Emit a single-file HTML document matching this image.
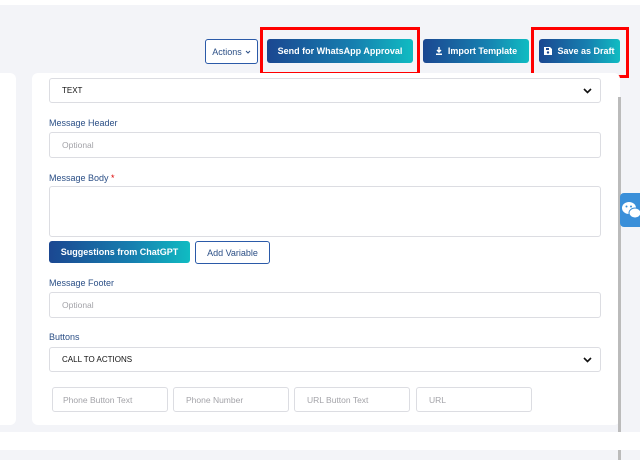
<!DOCTYPE html>
<html><head><style>
*{box-sizing:border-box;margin:0;padding:0}
html,body{width:640px;height:450px}
body{background:#f3f4f8;font-family:"Liberation Sans",sans-serif;position:relative;overflow:hidden;font-size:9px}
.a{position:absolute}
.top{left:0;top:0;width:640px;height:5px;background:#fff}
.g{background:linear-gradient(90deg,#1b4791,#1680b0 60%,#10bcc2);color:#fff;font-weight:bold;border-radius:3px;display:flex;align-items:center;justify-content:center;font-size:9px;gap:5px}
.red{border:3px solid #f00}
.card{background:#fff;border-radius:6px}
.lbl{color:#2b4f86;font-size:9px}
.inp{border:1px solid #dcdde2;border-radius:3px;background:#fff;color:#a3a3a8;font-size:8.5px;display:flex;align-items:center;padding-left:12px}
.sel{color:#111;justify-content:space-between;padding-right:8px}
</style></head><body>
<div class="a top"></div>
<div class="a" style="left:205px;top:39px;width:53px;height:25px;border:1px solid #2b5aa8;border-radius:3px;background:#fff;color:#2b4f86;display:flex;align-items:center;justify-content:center;gap:3px">Actions <svg width="6" height="4" viewBox="0 0 6 4"><path d="M1 1l2 2 2-2" stroke="#2b4f86" fill="none"/></svg></div>
<div class="a red" style="left:260px;top:27px;width:160px;height:48px"></div>
<div class="a g" style="left:267px;top:39px;width:146px;height:24px">Send for WhatsApp Approval</div>
<div class="a g" style="left:423px;top:39px;width:106px;height:24px"><svg width="8" height="8" viewBox="0 0 8 8"><path d="M4 0v5M2 3l2 2 2-2" stroke="#fff" fill="none" stroke-width="1.4"/><rect x="1" y="6.5" width="6" height="1.5" fill="#fff"/></svg>Import Template</div>
<div class="a red" style="left:531px;top:27px;width:98px;height:51px"></div>
<div class="a g" style="left:539px;top:39px;width:81px;height:24px"><svg width="8" height="8" viewBox="0 0 8 8"><path d="M0 0h6l2 2v6H0z" fill="#fff"/><rect x="2" y="1" width="3" height="2" fill="#1b4791"/><circle cx="4" cy="5.5" r="1.2" fill="#1b4791"/></svg>Save as Draft</div>
<div class="a card" style="left:-6px;top:73px;width:22px;height:352px"></div>
<div class="a card" style="left:32px;top:73px;width:588px;height:352px"></div>
<div class="a" style="left:618px;top:97px;width:3px;height:363px;background:#bbb"></div>
<div class="a" style="left:0;top:432px;width:640px;height:18px;background:#fff"></div>
<div class="a" style="left:620px;top:193px;width:20px;height:34px;background:#3a8fd9;border-radius:4px 0 0 4px"><svg class="a" style="left:1px;top:7px" width="20" height="20" viewBox="0 0 20 20"><ellipse cx="8" cy="8" rx="7" ry="6" fill="#fff"/><ellipse cx="14" cy="13" rx="6" ry="5" fill="#fff" stroke="#3a8fd9"/><circle cx="5.5" cy="6.5" r="1" fill="#3a8fd9"/><circle cx="10" cy="6.5" r="1" fill="#3a8fd9"/></svg></div>
<div class="a inp sel" style="left:49px;top:78px;width:552px;height:25px"><span style="font-size:8px">TEXT</span><svg width="9" height="6" viewBox="0 0 9 6"><path d="M1 1l3.5 3.5L8 1" stroke="#111" fill="none" stroke-width="1.6"/></svg></div>
<div class="a lbl" style="left:49px;top:118px">Message Header</div>
<div class="a inp" style="left:49px;top:132px;width:552px;height:26px">Optional</div>
<div class="a lbl" style="left:49px;top:173px">Message Body <span style="color:#d00">*</span></div>
<div class="a inp" style="left:49px;top:186px;width:552px;height:51px"></div>
<div class="a g" style="left:49px;top:241px;width:141px;height:22px">Suggestions from ChatGPT</div>
<div class="a" style="left:195px;top:241px;width:75px;height:23px;border:1px solid #2b5aa8;border-radius:3px;color:#2b4f86;display:flex;align-items:center;justify-content:center">Add Variable</div>
<div class="a lbl" style="left:49px;top:278px">Message Footer</div>
<div class="a inp" style="left:49px;top:292px;width:552px;height:26px">Optional</div>
<div class="a lbl" style="left:49px;top:332px">Buttons</div>
<div class="a inp sel" style="left:49px;top:347px;width:552px;height:25px"><span style="font-size:8px">CALL TO ACTIONS</span><svg width="9" height="6" viewBox="0 0 9 6"><path d="M1 1l3.5 3.5L8 1" stroke="#111" fill="none" stroke-width="1.6"/></svg></div>
<div class="a inp" style="left:52px;top:387px;width:116px;height:25px;padding-left:10px">Phone Button Text</div>
<div class="a inp" style="left:173px;top:387px;width:116px;height:25px">Phone Number</div>
<div class="a inp" style="left:294px;top:387px;width:116px;height:25px">URL Button Text</div>
<div class="a inp" style="left:416px;top:387px;width:116px;height:25px">URL</div>
</body></html>
